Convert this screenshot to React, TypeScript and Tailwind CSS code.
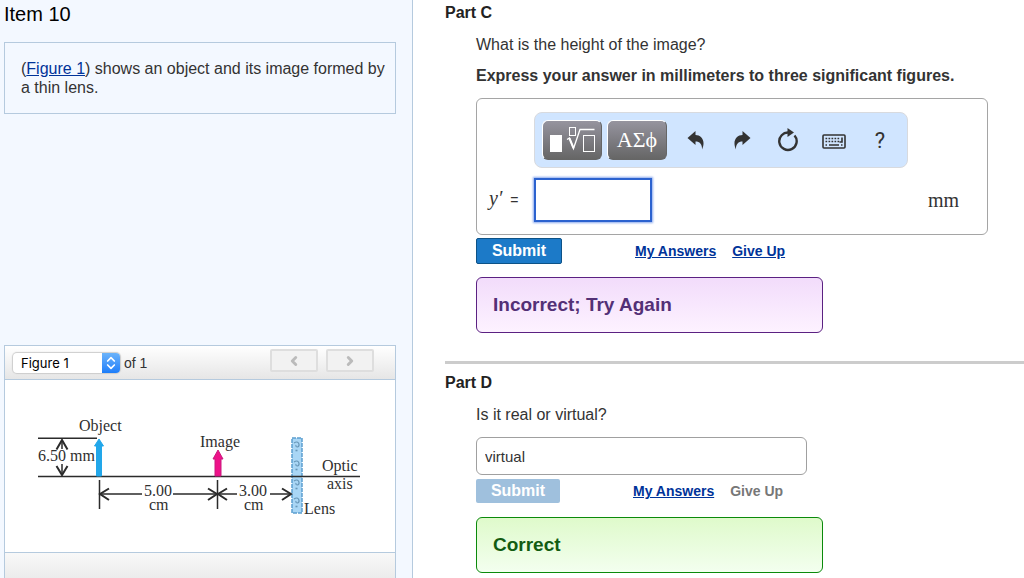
import { useState, type ReactNode } from "react";
import { ChevronLeft, ChevronRight, ChevronsUpDown } from "lucide-react";

function LensDiagram() {
  return (
    <svg
      viewBox="0 0 390 172"
      role="img"
      aria-label="Object, image and thin lens on the optic axis"
      className="block w-full max-w-[390px]"
      fill="none"
      stroke="#2b2b2b"
      strokeWidth="1.5"
    >
      {/* lens */}
      <rect x="287" y="58" width="10" height="75" fill="#a9d6f5" stroke="#5b9fd0" strokeDasharray="4 1" />
      {[62, 81, 100, 118].map((y) => (
        <g key={y} stroke="#6797b8" strokeWidth="1.2">
          <path d={`M289 ${y + 1} q3 -2 4.500 0 q1.500 3 -1 4 q-2 0 -1.500 -2`} />
          <path d={`M290.500 ${y + 8.500} h2`} strokeWidth="1.600" />
        </g>
      ))}

      {/* axis and height guides */}
      <path d="M33 96.500H355" />
      <path d="M33 58.200H92" />
      <path d="M57 61V69M57 84V94" />
      <path d="M51.500 69.500L57 60L62.500 69.500M51.500 86L57 95L62.500 86" strokeWidth="2" />

      {/* object and image arrows */}
      <path d="M91.500 96V66H89.500L94 59L98.500 66H96.500V96Z" fill="#22a7ea" stroke="#22a7ea" strokeWidth="1" />
      <path d="M210 96V79H208L213 70L218 79H216V96Z" fill="#ee1289" stroke="#c9187e" strokeWidth="1" />

      {/* distances */}
      <path d="M94.500 100V129M212.500 100V129" />
      <path d="M95 114H137M168 114H212M213 114H232M265 114H286" />
      <path d="M104 108.500L95 114L104 120M203 108.500L212 114L203 120" strokeWidth="2" />
      <path d="M222 108.500L213 114L222 120M277 108.500L286 114L277 120" strokeWidth="2" />

      <g
        fill="#2f2f2f"
        stroke="none"
        fontSize="16"
        fontFamily="'Liberation Serif', serif"
      >
        <text x="74" y="51">Object</text>
        <text x="195" y="67">Image</text>
        <text x="33" y="81">6.50 mm</text>
        <text x="139" y="116">5.00</text>
        <text x="144" y="130">cm</text>
        <text x="234" y="116">3.00</text>
        <text x="239" y="130">cm</text>
        <text x="317" y="91">Optic</text>
        <text x="322" y="109">axis</text>
        <text x="299" y="134">Lens</text>
      </g>
    </svg>
  );
}

function TemplateIcon() {
  return (
    <svg width="46" height="28" viewBox="0 0 46 28" fill="none" stroke="#fff">
      <rect x="1" y="9" width="12" height="17" fill="#fff" stroke="none" />
      <rect x="20.500" y="1.500" width="6" height="8" />
      <path d="M18 13.500L20.500 12L24.500 22.500L31 3.500H45.500" strokeWidth="1.300" />
      <path d="M20.500 12.500L24.500 22" strokeWidth="2" />
      <rect x="34.500" y="9.500" width="11" height="16" />
    </svg>
  );
}

function UndoIcon() {
  return (
    <svg width="18" height="20" viewBox="0 0 18 20" fill="#333">
      <path d="M0.500 8L8.500 1V5C14.500 5 19 11 15 19.500C15.300 14.500 13 11.500 8.500 11.500V15Z" />
    </svg>
  );
}

function RedoIcon() {
  return (
    <svg width="18" height="20" viewBox="0 0 18 20" fill="#333">
      <path d="M17.500 8L9.500 1V5C3.500 5 -1 11 3 19.500C2.700 14.500 5 11.500 9.500 11.500V15Z" />
    </svg>
  );
}

function ResetIcon() {
  return (
    <svg width="22" height="24" viewBox="0 0 22 24" fill="none" stroke="#333" strokeWidth="2.400">
      <path d="M12 4.600A8.700 8.700 0 1 0 17.500 7.500" />
      <path d="M10.500 0L17 4.500L10.500 9Z" fill="#333" stroke="none" />
    </svg>
  );
}

function KeyboardIcon() {
  return (
    <svg width="24" height="20" viewBox="0 -4 24 20" fill="none" stroke="#333">
      <rect x="1" y="1" width="22" height="13" rx="1" strokeWidth="1.600" />
      <path d="M3.500 4.500H18.500" strokeWidth="1.600" strokeDasharray="1.700 1.300" />
      <path d="M3.500 7.500H17.500" strokeWidth="1.600" strokeDasharray="1.700 1.300" />
      <path d="M20 3.500V8H17.500" strokeWidth="1.600" />
      <path d="M3.500 11H5M7 11H17M19 11H20.500" strokeWidth="1.600" />
    </svg>
  );
}

const tools = [
  { label: "Undo", icon: <UndoIcon /> },
  { label: "Redo", icon: <RedoIcon /> },
  { label: "Reset", icon: <ResetIcon /> },
  { label: "Keyboard shortcuts", icon: <KeyboardIcon /> },
  { label: "Help", icon: "?" },
];

function ToolButton({ label, children }: { label: string; children: ReactNode }) {
  return (
    <button
      type="button"
      aria-label={label}
      className="flex h-10 w-15 items-center justify-center rounded-md border border-t-white border-l-white border-r-[#666] border-b-[#666] bg-linear-to-b from-[#96949f] to-[#666] font-['Liberation_Serif',serif] text-[22px] leading-6 text-white"
    >
      {children}
    </button>
  );
}

function FigurePanel() {
  return (
    <section className="mt-auto border border-b-0 border-[#b5cade]">
      <div className="flex h-[34px] items-center border-b border-[#b5cade] bg-linear-to-b from-white to-[#e6e6e6] pr-[21px] pl-2">
        <div className="relative flex">
          <select
            aria-label="Figure"
            className="h-5 w-[107px] appearance-none rounded-sm bg-white pl-2 font-['Inter',sans-serif] text-[13px] leading-5 text-black shadow-[0_0_1px_1px_#ccc]"
          >
            <option>Figure 1</option>
          </select>
          <span className="pointer-events-none absolute inset-y-0 right-0 flex w-[18px] items-center justify-center rounded-r-sm bg-linear-to-b from-[#6bb3fa] to-[#1a7dfa] text-white">
            <ChevronsUpDown size={16} strokeWidth={2.5} />
          </span>
        </div>
        <span className="ml-1 text-sm text-[#333]">of 1</span>
        <div className="mb-1 ml-auto flex gap-2 text-[#bbb]">
          <button type="button" disabled aria-label="Previous figure" className="flex h-[23px] w-12 items-center justify-center rounded-xs border-2 border-[#dedede] bg-[#f2f2f2]">
            <ChevronLeft size={14} strokeWidth={5} />
          </button>
          <button type="button" disabled aria-label="Next figure" className="flex h-[23px] w-12 items-center justify-center rounded-xs border-2 border-[#dedede] bg-[#f2f2f2]">
            <ChevronRight size={14} strokeWidth={5} />
          </button>
        </div>
      </div>
      <div className="bg-white">
        <LensDiagram />
      </div>
      <div className="h-[26px] border-t border-[#b5cade] bg-linear-to-b from-[#f8f8f8] to-[#ececec]" />
    </section>
  );
}

export default function App() {
  const [height, setHeight] = useState("");
  const [kind, setKind] = useState("virtual");

  return (
    <div className="flex min-h-screen bg-white font-['Liberation_Sans',Arial,sans-serif] text-[#333]">
      <aside className="flex w-[413px] shrink-0 flex-col border-r border-[#b5cade] bg-[#f3f8ff] pr-4 pl-1">
        <h1 className="mt-[2px] text-xl leading-6 text-black">Item 10</h1>
        <div className="mt-4 border border-[#b5cade] py-4 pr-2 pl-4 text-base leading-[19px]">
          <p>
            (<a href="#figure" className="text-[#039] underline">Figure 1</a>) shows an object and its image formed by a thin lens.
          </p>
        </div>
        <FigurePanel />
      </aside>

      <main className="min-w-0 flex-1 pl-8">
        <section className="border-b-3 border-[#ccc] pb-7">
          <h2 className="pt-[3px] text-base leading-5 font-bold text-[#222]">Part C</h2>
          <div className="mt-3 mr-9 ml-[31px]">
            <p className="text-base leading-5">What is the height of the image?</p>
            <p className="mt-[11px] text-base leading-5 font-bold">
              Express your answer in millimeters to three significant figures.
            </p>

            <div className="mt-3 max-w-[512px] rounded-md border border-[#a5a5a5] pt-[13px] pr-7 pb-3">
              <div className="ml-[57px] flex w-fit items-center rounded-lg border border-[#d8dade] bg-[#d0e5ff] py-[7px] pr-1 pl-[7px]">
                <div className="mr-[6px] flex gap-[5px]">
                  <ToolButton label="Templates"><TemplateIcon /></ToolButton>
                  <ToolButton label="Symbols">ΑΣϕ</ToolButton>
                </div>
                {tools.map((tool) => (
                  <button
                    key={tool.label}
                    type="button"
                    aria-label={tool.label}
                    className="flex h-10 w-[46px] items-center justify-center font-['Roboto',sans-serif] text-[22px] text-[#333]"
                  >
                    {tool.icon}
                  </button>
                ))}
              </div>
              <div className="mt-[10px] flex items-center">
                <label htmlFor="height" className="w-[57px] shrink-0 pb-1 pl-3 text-sm">
                  <span className="mr-2 font-['Liberation_Serif',serif] text-xl italic">y′</span>=
                </label>
                <input
                  id="height"
                  value={height}
                  onChange={(e) => setHeight(e.target.value)}
                  className="h-11 w-[118px] border-2 border-[#2c62cf] bg-white px-2 shadow-[0_0_2px_1px_#8aa9ee] outline-none"
                />
                <span className="ml-auto font-['Liberation_Serif',serif] text-xl">mm</span>
              </div>
            </div>

            <div className="mt-[3px] flex items-center text-sm font-bold">
              <button type="button" className="mr-[73px] h-[26px] w-[86px] rounded-xs border border-[#0d5287] bg-[#1c7ac8] text-base leading-6 text-white">
                Submit
              </button>
              <a href="#answers" className="mr-4 text-[#039] underline">My Answers</a>
              <a href="#give-up" className="text-[#039] underline">Give Up</a>
            </div>

            <div className="mt-[13px] max-w-[347px] rounded-md border border-[#5b2182] bg-linear-to-b from-[#f2dcfb] to-[#fdf2ff] px-4 py-[15px] text-[19px] leading-6 font-bold text-[#533076]">
              Incorrect; Try Again
            </div>
          </div>
        </section>

        <section>
          <h2 className="pt-[9px] text-base leading-5 font-bold text-[#222]">Part D</h2>
          <div className="mt-3 mr-9 ml-[31px]">
            <label htmlFor="kind" className="block text-base leading-5">Is it real or virtual?</label>
            <input
              id="kind"
              value={kind}
              onChange={(e) => setKind(e.target.value)}
              className="mt-3 block h-[38px] w-full max-w-[331px] rounded-md border border-[#a0a0a0] bg-white px-2 text-[15px] outline-none"
            />

            <div className="mt-1 flex items-center text-sm font-bold">
              <button type="button" disabled className="mr-[73px] h-6 w-[84px] rounded-xs bg-[#9fc0dd] text-base leading-6 text-white">
                Submit
              </button>
              <a href="#answers" className="mr-4 text-[#039] underline">My Answers</a>
              <span className="text-[#777]">Give Up</span>
            </div>

            <div className="mt-[14px] max-w-[347px] rounded-md border border-[#0b8a0b] bg-linear-to-b from-[#dffacb] to-[#f3ffef] px-4 py-[15px] text-[19px] leading-6 font-bold text-[#125c12]">
              Correct
            </div>
          </div>
        </section>
      </main>
    </div>
  );
}
